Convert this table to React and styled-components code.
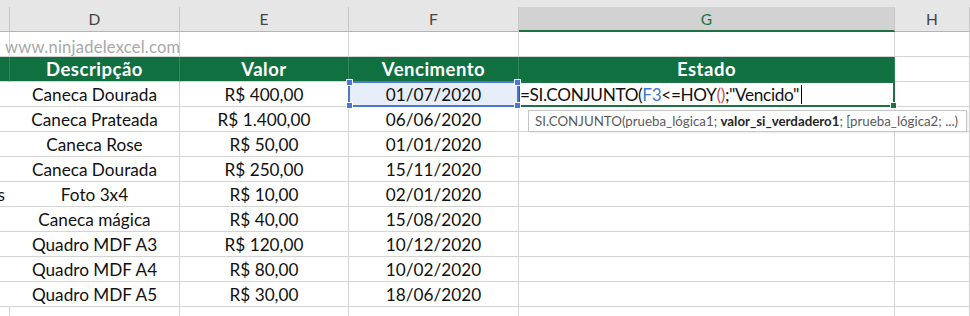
import React from "react";
import styled, { createGlobalStyle } from "styled-components";

const GlobalStyle = createGlobalStyle`
  html, body {
    margin: 0;
    padding: 0;
    background: #ffffff;
  }
  body {
    width: 970px;
    height: 316px;
    overflow: hidden;
    font-family: Lato, "Noto Sans", sans-serif;
  }
`;

const COLUMNS = ["C", "D", "E", "F", "G", "H"];
const HEADERS = ["", "Descripção", "Valor", "Vencimento", "Estado"];

const ROWS = [
  ["Caneca Dourada", "R$ 400,00", "01/07/2020"],
  ["Caneca Prateada", "R$ 1.400,00", "06/06/2020"],
  ["Caneca Rose", "R$ 50,00", "01/01/2020"],
  ["Caneca Dourada", "R$ 250,00", "15/11/2020"],
  ["Foto 3x4", "R$ 10,00", "02/01/2020"],
  ["Caneca mágica", "R$ 40,00", "15/08/2020"],
  ["Quadro MDF A3", "R$ 120,00", "10/12/2020"],
  ["Quadro MDF A4", "R$ 80,00", "10/02/2020"],
  ["Quadro MDF A5", "R$ 30,00", "18/06/2020"],
];

const Formula = () => (
  <S.FormulaText>
    =SI.CONJUNTO(<S.Ref>F3</S.Ref>&lt;=HOY<S.Paren>()</S.Paren>;"Vencido"
    <S.Caret />
  </S.FormulaText>
);

const App = () => {
  return (
    <>
      <GlobalStyle />
      <S.Wrap>
        <S.TopStrip />
        <S.Sheet>
          {COLUMNS.map((col) => (
            <S.ColHead key={col} $selected={col === "G"}>
              {col === "C" ? "" : col}
            </S.ColHead>
          ))}

          {COLUMNS.map((col) => (
            <S.Cell key={"r1" + col} />
          ))}

          {HEADERS.map((title, i) => (
            <S.HeadCell key={"h" + i}>{title}</S.HeadCell>
          ))}
          <S.Cell />

          {ROWS.map((row, r) => (
            <React.Fragment key={"row" + r}>
              <S.Cell $align="flex-end">{r === 4 ? "s" : ""}</S.Cell>
              <S.Cell>{row[0]}</S.Cell>
              <S.Cell>{row[1]}</S.Cell>
              <S.Cell $ref={r === 0}>
                {row[2]}
                {r === 0 && (
                  <S.RefBox>
                    <S.Handle $top $left />
                    <S.Handle $top />
                    <S.Handle $left />
                    <S.Handle />
                  </S.RefBox>
                )}
              </S.Cell>
              <S.Cell $align="flex-start" $edit={r === 0}>
                {r === 0 && (
                  <>
                    <Formula />
                    <S.EditBox>
                      <S.FillHandle />
                    </S.EditBox>
                  </>
                )}
              </S.Cell>
              <S.Cell />
            </React.Fragment>
          ))}

          {COLUMNS.map((col) => (
            <S.Cell key={"last" + col} />
          ))}
        </S.Sheet>

        <S.Watermark>www.ninjadelexcel.com</S.Watermark>
        <S.Tooltip>
          SI.CONJUNTO(prueba_lógica1; <b>valor_si_verdadero1</b>; [prueba_lógica2; ...)
        </S.Tooltip>
      </S.Wrap>
    </>
  );
};

const S = {
  Wrap: styled.div`
    position: relative;
    width: 970px;
    height: 316px;
    overflow: hidden;
  `,
  TopStrip: styled.div`
    height: 7px;
    background: #e6e6e6;
  `,
  Sheet: styled.div`
    display: grid;
    grid-template-columns: 10px 170px 169px 170px 376px 1fr;
    grid-auto-rows: 25px;
  `,
  ColHead: styled.div`
    box-sizing: border-box;
    display: flex;
    align-items: center;
    justify-content: center;
    background: ${(p) => (p.$selected ? "#d2d2d2" : "#e6e6e6")};
    color: ${(p) => (p.$selected ? "#1e7145" : "#444444")};
    border-right: 1px solid #c8c8c8;
    border-bottom: ${(p) => (p.$selected ? "2px solid #1e7145" : "1px solid #b4b4b4")};
    font-size: 15.5px;
    padding-top: ${(p) => (p.$selected ? "1px" : "0")};
  `,
  Cell: styled.div`
    position: relative;
    box-sizing: border-box;
    display: flex;
    align-items: center;
    justify-content: ${(p) => p.$align || "center"};
    padding: 0 ${(p) => (p.$align === "flex-end" ? "5px" : "1px")};
    border-right: 1px solid #d4d4d4;
    border-bottom: 1px solid #d4d4d4;
    background: ${(p) => (p.$ref ? "#e8eef9" : "#ffffff")};
    color: #111111;
    font-size: 17.2px;
    white-space: nowrap;
    overflow: ${(p) => (p.$ref || p.$edit ? "visible" : "hidden")};
    z-index: ${(p) => (p.$ref ? 3 : p.$edit ? 2 : "auto")};
  `,
  HeadCell: styled.div`
    box-sizing: border-box;
    display: flex;
    align-items: center;
    justify-content: center;
    background: #117040;
    color: #ffffff;
    font-weight: 700;
    font-size: 18.5px;
    letter-spacing: 0.5px;
    border-right: 1px solid rgba(255, 255, 255, 0.14);
    border-bottom: 1px solid #d4d4d4;
  `,
  RefBox: styled.div`
    position: absolute;
    top: -1px;
    left: -1px;
    right: -1px;
    bottom: -1px;
    border: 2px solid #4a78cf;
    pointer-events: none;
  `,
  Handle: styled.span`
    position: absolute;
    width: 5px;
    height: 5px;
    background: #4a78cf;
    border: 1px solid #ffffff;
    ${(p) => (p.$top ? "top: -4px;" : "bottom: -4px;")}
    ${(p) => (p.$left ? "left: -4px;" : "right: -4px;")}
  `,
  EditBox: styled.div`
    position: absolute;
    top: -1px;
    left: -1px;
    right: -1px;
    bottom: -1px;
    border: 2px solid #1e7145;
    pointer-events: none;
  `,
  FillHandle: styled.span`
    position: absolute;
    right: -4px;
    bottom: -4px;
    width: 5px;
    height: 5px;
    background: #1e7145;
    border: 1px solid #ffffff;
  `,
  FormulaText: styled.span`
    display: flex;
    align-items: center;
    color: #111111;
    letter-spacing: -0.35px;
  `,
  Ref: styled.span`
    color: #3f78d6;
  `,
  Paren: styled.span`
    color: #c0504d;
  `,
  Caret: styled.span`
    display: inline-block;
    width: 1px;
    height: 19px;
    margin-left: 2px;
    background: #000000;
  `,
  Watermark: styled.div`
    position: absolute;
    left: 5px;
    top: 37px;
    font-size: 16.5px;
    color: #a8a8a8;
    letter-spacing: 0.25px;
    pointer-events: none;
  `,
  Tooltip: styled.div`
    position: absolute;
    left: 528px;
    top: 110px;
    box-sizing: border-box;
    width: 439px;
    height: 22px;
    display: flex;
    align-items: center;
    padding-left: 6px;
    background: #ffffff;
    border: 1px solid #c6c6c6;
    box-shadow: 1px 1px 2px rgba(0, 0, 0, 0.08);
    color: #5a5a5a;
    font-size: 13.3px;
    white-space: pre;
    z-index: 5;

    b {
      color: #262626;
      font-weight: 700;
    }
  `,
};

export default App;
